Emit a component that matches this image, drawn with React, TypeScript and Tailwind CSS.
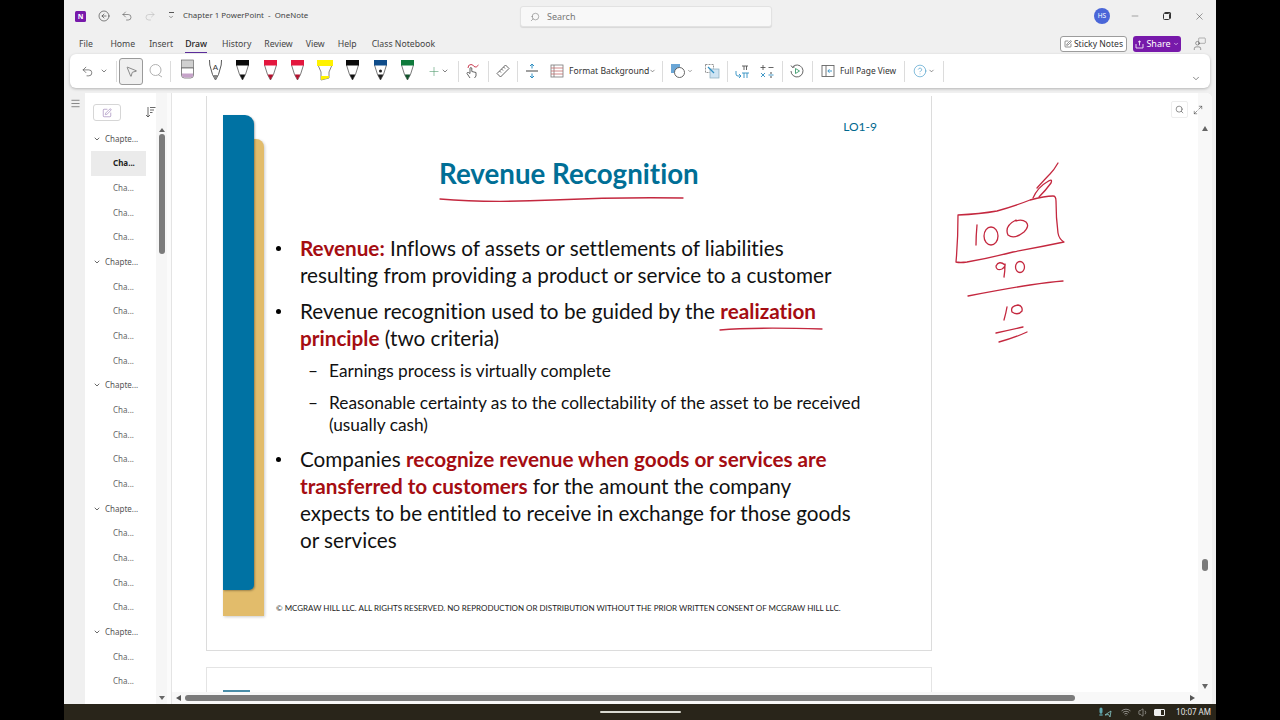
import React from "react";
import { ChevronDown, CircleArrowLeft, Undo2, Redo2, Minus, X, Search, Plus, Menu, Maximize2, SquarePen, CircleHelp, Wifi, Volume1, MessageSquare, User, MousePointer2 } from "lucide-react";

const ui = "font-['Noto_Sans','Open_Sans',sans-serif]";
const slide = "font-['Lato','Liberation_Sans',sans-serif] [font-variant-ligatures:none]";

function Pen({ color, tip = "#333", nib }: { color: string; tip?: string; nib?: boolean }) {
  return (
    <svg width="15" height="24" viewBox="0 0 15 24">
      <path d="M1.5 6 L4.5 15.5 L7.5 21 L10.5 15.5 L13.5 6" fill="#fff" stroke="#555" strokeWidth="0.8" />
      <path d="M4.7 15.5 L7.5 21 L10.3 15.5 Z" fill={tip} />
      <rect x="1" y="1" width="13" height="5.5" fill={color} />
      {nib && <circle cx="7.5" cy="12" r="1.5" fill="#222" />}
    </svg>
  );
}

function Divider({ cls }: { cls: string }) {
  return <div className={`w-px h-[21px] bg-[#dcdcdc] shrink-0 ${cls}`} />;
}

function Box({ cls, children }: { cls: string; children?: React.ReactNode }) {
  return <div className={`flex items-center justify-center shrink-0 ${cls}`}>{children}</div>;
}

function Ribbon() {
  return (
    <div className={`mx-[6px] h-[34px] bg-white rounded-[6px] shadow-[0_1px_3px_rgba(0,0,0,0.25)] flex items-center pl-[9px] relative ${ui}`}>
      <Box cls="w-[17px]"><Undo2 size={13} strokeWidth={1.2} color="#444" /></Box>
      <Box cls="w-[16px]"><ChevronDown size={8} strokeWidth={2} color="#444" /></Box>
      <Divider cls="ml-[4px]" />
      <Box cls="ml-[2px] w-[24px] h-[27px] bg-[#f0f0f0] border border-[#9a9a9a] rounded-[3px]"><MousePointer2 size={13} strokeWidth={1.1} color="#444" /></Box>
      <Box cls="ml-px w-[24px]">
        <svg width="16" height="16" viewBox="0 0 16 16" fill="none" stroke="#a8a8a8" strokeWidth="0.9"><circle cx="7.5" cy="7" r="5.5" /><path d="M10 11.5 L14 14" /></svg>
      </Box>
      <Divider cls="ml-[2px]" />
      <Box cls="ml-[3px] w-[27.5px]">
        <svg width="15" height="24" viewBox="0 0 15 24">
          <rect x="1.5" y="1" width="12" height="8" fill="#d0d0d0" stroke="#555" strokeWidth="0.6" />
          <path d="M1.5 9 H13.5 V16 Q13.5 19 10.5 19 H4.5 Q1.5 19 1.5 16 Z" fill="#fff" stroke="#555" strokeWidth="0.7" />
          <path d="M2 14.5 H13 V16 Q13 18.5 10.5 18.5 H4.5 Q2 18.5 2 16 Z" fill="#c6a3c9" />
        </svg>
      </Box>
      <Box cls="w-[27.5px]">
        <svg width="15" height="24" viewBox="0 0 15 24" fill="none">
          <path d="M1.5 1 L1.8 6 L4.5 15.5 L7.5 21 L10.5 15.5 L13.2 6 L13.5 1" fill="#fff" stroke="#444" strokeWidth="0.9" />
          <path d="M5 16 L7.5 21 L10 16 Z" fill="#888" />
          <text x="7.5" y="11" textAnchor="middle" fontSize="8" fill="#333" fontFamily="Liberation Sans">A</text>
        </svg>
      </Box>
      <Box cls="w-[27.5px]"><Pen color="#0a0a0a" tip="#111" /></Box>
      <Box cls="w-[27.5px]"><Pen color="#e3173e" tip="#b3122f" /></Box>
      <Box cls="w-[27.5px]"><Pen color="#e3173e" tip="#b3122f" /></Box>
      <Box cls="w-[27.5px]">
        <svg width="18" height="24" viewBox="0 0 18 24">
          <path d="M2 6 L5 13 V21 L13 19 V13 L16 6" fill="#fff" stroke="#666" strokeWidth="0.8" />
          <path d="M5 17 H13 V19 L5 21 Z" fill="#fff200" />
          <rect x="1" y="1" width="16" height="6" fill="#fff200" />
        </svg>
      </Box>
      <Box cls="w-[27.5px]"><Pen color="#0a0a0a" tip="#111" /></Box>
      <Box cls="w-[27.5px]"><Pen color="#0f4c8a" tip="#222" nib /></Box>
      <Box cls="w-[27.5px]"><Pen color="#0f7a3c" tip="#14532d" /></Box>
      <Box cls="ml-[5px] w-[14px]"><Plus size={15} strokeWidth={1} color="#4d9a6a" /></Box>
      <Box cls="w-[8px]"><ChevronDown size={8} strokeWidth={2} color="#444" /></Box>
      <Divider cls="ml-[9px]" />
      <Box cls="ml-[6px] w-[16px]">
        <svg width="15" height="16" viewBox="0 0 15 16" fill="none" stroke="#555" strokeWidth="0.9"><path d="M5 15 L2 10.5 Q2 9 3.5 9.5 L5 10.5 V5 Q5.8 4 6.8 5 V8.5 L11 9.5 V13 L9.5 15" /><path d="M3 5 Q3 1.5 6 1.5 Q8 1.5 9 3.5 Q11 5.5 13.5 2" stroke="#c4283f" /></svg>
      </Box>
      <Divider cls="ml-[7px]" />
      <Box cls="ml-[6px] w-[16px]">
        <svg width="14" height="14" viewBox="0 0 14 14" fill="none" stroke="#555" strokeWidth="0.9"><path d="M1 9.5 L9.5 1 L13 4.5 L4.5 13 Z" /><path d="M3.5 7 l1.5 1.5 M5.5 5 l1.5 1.5 M7.5 3 l1.5 1.5" /></svg>
      </Box>
      <Divider cls="ml-[6px]" />
      <Box cls="ml-[6px] w-[16px]">
        <svg width="14" height="16" viewBox="0 0 14 16" fill="none" stroke="#2f8fc2" strokeWidth="1"><path d="M7 1 V5.5 M5 3 L7 1 L9 3 M7 15 V10.5 M5 13 L7 15 L9 13" /><path d="M1 8 H13" stroke="#777" strokeWidth="1.4" /></svg>
      </Box>
      <Box cls="ml-[4.5px] w-[25px]">
        <svg width="14" height="14" viewBox="0 0 14 14" fill="none" stroke="#777" strokeWidth="0.8"><rect x="1" y="1" width="12" height="12" /><path d="M4 1 V13" /><path d="M1 4 H13 M1 7 H13 M1 10 H13" stroke="#c46a6a" /></svg>
      </Box>
      <span className="text-[8.6px] text-[#333] whitespace-nowrap w-[80px]">Format Background</span>
      <Box cls="w-[7px]"><ChevronDown size={8} strokeWidth={2} color="#444" /></Box>
      <Divider cls="ml-[6px]" />
      <Box cls="ml-[6.5px] w-[17px]">
        <svg width="16" height="16" viewBox="0 0 16 16" fill="none"><rect x="1" y="1" width="9" height="9" fill="#6aa6d6" /><circle cx="9.5" cy="9.5" r="5" fill="#fff" stroke="#555" strokeWidth="0.9" /></svg>
      </Box>
      <Box cls="w-[6px]"><ChevronDown size={8} strokeWidth={2} color="#444" /></Box>
      <Box cls="ml-[9.5px] w-[20px]">
        <svg width="16" height="16" viewBox="0 0 16 16" fill="none"><rect x="1.5" y="1.5" width="8" height="8" stroke="#777" strokeWidth="0.8" strokeDasharray="2 1" /><rect x="6" y="6" width="9" height="9" fill="#cfe4f3" stroke="#8ab" strokeWidth="0.7" /><path d="M4 4 L10 10" stroke="#2f8fc2" strokeWidth="1.2" /></svg>
      </Box>
      <Divider cls="ml-[5px]" />
      <Box cls="ml-[6px] w-[16px]">
        <svg width="15" height="16" viewBox="0 0 15 16" fill="none" stroke="#2f8fc2" strokeWidth="0.9"><path d="M1 8 V11 Q1 13 3 13 H6 M4 11 L6 13 L4 15" /><path d="M7 3 H13 M9 3 V7 M11.5 3 V7" stroke="#555" /><path d="M7 10 H14 M9 10 V15 M12 10 V15" /></svg>
      </Box>
      <Box cls="ml-[9px] w-[16px]">
        <svg width="14" height="14" viewBox="0 0 14 14" fill="none" stroke="#555" strokeWidth="0.9"><path d="M3 1 V6 M0.5 3.5 H5.5 M8.5 3.5 H13.5" /><path d="M1 9 L5 13 M5 9 L1 13" stroke="#2f8fc2" /><path d="M8.5 11 H13.5" stroke="#2f8fc2" /><circle cx="11" cy="9" r="0.5" /><circle cx="11" cy="13" r="0.5" /></svg>
      </Box>
      <Divider cls="ml-[7px]" />
      <Box cls="ml-[6px] w-[16px]">
        <svg width="14" height="14" viewBox="0 0 14 14" fill="none" stroke="#555" strokeWidth="0.9"><path d="M2.5 3 A6 6 0 1 1 1 7" /><path d="M1 1.5 L2.5 3.5 L4.8 2.8" /><path d="M5.5 4.5 L9.5 7 L5.5 9.5 Z" stroke="#3a9a6a" /></svg>
      </Box>
      <Divider cls="ml-[7px]" />
      <Box cls="ml-[7px] w-[16px]">
        <svg width="14" height="14" viewBox="0 0 14 14" fill="none" stroke="#666" strokeWidth="0.9"><rect x="1" y="1.5" width="12" height="11" /><path d="M5 1.5 V12.5" /><path d="M11 7 H7 M8.5 5.2 L6.8 7 L8.5 8.8" stroke="#2f8fc2" /></svg>
      </Box>
      <span className="ml-[4px] text-[8.4px] text-[#333] whitespace-nowrap w-[57px]">Full Page View</span>
      <Divider cls="ml-[7px]" />
      <Box cls="ml-[7px] w-[16px]"><CircleHelp size={14} strokeWidth={1} color="#2f8fc2" /></Box>
      <Box cls="w-[7px]"><ChevronDown size={8} strokeWidth={2} color="#444" /></Box>
      <Divider cls="ml-[8px]" />
      <Box cls="ml-auto mr-[9px] mt-[14px] w-[10px]"><ChevronDown size={11} strokeWidth={1.4} color="#333" /></Box>
    </div>
  );
}

const tabs: [string, string][] = [
  ["File", "ml-[15px]"],
  ["Home", "ml-[17.5px]"],
  ["Insert", "ml-[14px]"],
  ["Draw", "ml-[12px]"],
  ["History", "ml-[15px]"],
  ["Review", "ml-[13px]"],
  ["View", "ml-[13px]"],
  ["Help", "ml-[13px]"],
  ["Class Notebook", "ml-[15px]"],
];

function Sidebar() {
  const rows: { t: string; section?: boolean; active?: boolean }[] = [];
  for (let s = 0; s < 5; s++) {
    rows.push({ t: "Chapte...", section: true });
    for (let i = 0; i < 4; i++) rows.push({ t: "Cha...", active: s === 0 && i === 0 });
  }
  return (
    <div className={`w-[87px] shrink-0 bg-white flex ${ui}`}>
      <div className="w-[71px] shrink-0 overflow-hidden">
        <div className="h-[33.5px] pt-[11px] flex items-start">
          <div className="ml-[8px] w-[28px] h-[17px] border border-[#d6d6d6] rounded-[3px] flex items-center justify-center">
            <SquarePen size={10} strokeWidth={1.2} color="#7d5a9e" />
          </div>
          <svg className="ml-[24px] mt-[2px]" width="11" height="12" viewBox="0 0 11 12" fill="none" stroke="#444" strokeWidth="0.8"><path d="M3 1 V11 M1 9 L3 11 L5 9 M5 1.5 H10.5 M5 4 H9 M5 6.5 H7.5" /></svg>
        </div>
        {rows.slice(0, 23).map((r, i) => (
          <div key={i} className={`h-[24.67px] flex items-center whitespace-nowrap text-[8px] ${r.active ? "ml-[6px] w-[55px] bg-[#ebebeb] font-bold text-[#222] pl-[22px]" : r.section ? "pl-[8px] text-[#555]" : "pl-[28px] text-[#666]"}`}>
            {r.section && <ChevronDown size={8} strokeWidth={2.2} color="#333" className="mr-[4px]" />}
            {r.t}
          </div>
        ))}
      </div>
      <div className="w-[11px] shrink-0 bg-[#f6f6f6] flex flex-col items-center pt-[35px] pb-[4px]">
        <div className="w-0 h-0 border-l-[3px] border-r-[3px] border-b-[4px] border-l-transparent border-r-transparent border-b-[#666]" />
        <div className="mt-[2px] w-[6px] h-[120px] bg-[#7b7b7b] rounded-[3px]" />
        <div className="mt-auto w-0 h-0 border-l-[3px] border-r-[3px] border-t-[4px] border-l-transparent border-r-transparent border-t-[#666]" />
      </div>
      <div className="flex-1 bg-[#fbfbfb] border-r border-[#e4e4e4]" />
    </div>
  );
}

function Bullet({ children }: { children: React.ReactNode }) {
  return (
    <div className="flex text-[20.7px] leading-[27px] text-[#111]">
      <div className="w-[25px] shrink-0 flex items-center h-[27px] pl-[1px]"><div className="w-[5px] h-[5px] rounded-full bg-black" /></div>
      <div className="w-[560px]">{children}</div>
    </div>
  );
}

function Sub({ children, cls }: { children: React.ReactNode; cls: string }) {
  return (
    <div className={`flex text-[17.3px] leading-[22px] text-[#111] ${cls}`}>
      <div className="ml-[33px] w-[21px] shrink-0">–</div>
      <div className="w-[545px]">{children}</div>
    </div>
  );
}

const R = ({ children }: { children: React.ReactNode }) => <span className="font-bold text-[#a50d12]">{children}</span>;

function Slide() {
  return (
    <div className={`ml-[34px] w-[726px] h-[555px] border-x border-b border-[#dcdcdc] flex pl-[16px] pt-[19px] ${slide}`}>
      <div className="w-[41px] h-[501px] shrink-0 relative">
        <div className="absolute left-0 right-0 top-[24px] bottom-0 bg-[#e2bc6b] rounded-tr-[8px] shadow-[1px_1px_3px_rgba(0,0,0,0.2)]" />
        <div className="absolute left-0 top-0 w-[31px] h-[475px] bg-[#0072a3] rounded-tr-[9px] rounded-br-[5px] shadow-[1px_1px_2px_rgba(0,0,0,0.3)]" />
      </div>
      <div className="ml-[11px] flex-1">
        <div className="h-[24px] flex items-center justify-end pr-[54px] text-[12px] text-[#00688f]">LO1-9</div>
        <div className="mt-[17px] pl-[164px] text-[27.7px] leading-[36px] font-bold text-[#006f96] whitespace-nowrap">Revenue Recognition</div>
        <div className="mt-[42.5px]">
          <Bullet><R>Revenue:</R> Inflows of assets or settlements of liabilities resulting from providing a product or service to a customer</Bullet>
        </div>
        <div className="mt-[9px]">
          <Bullet>Revenue recognition used to be guided by the <R>realization principle</R> (two criteria)</Bullet>
        </div>
        <Sub cls="mt-[8.5px]">Earnings process is virtually complete</Sub>
        <Sub cls="mt-[9.5px]">Reasonable certainty as to the collectability of the asset to be received (usually cash)</Sub>
        <div className="mt-[10px]">
          <Bullet>Companies <R>recognize revenue when goods or services are transferred to customers</R> for the amount the company expects to be entitled to receive in exchange for those goods or services</Bullet>
        </div>
        <div className="mt-[47px] ml-px text-[7.97px] leading-[14px] text-[#222] whitespace-nowrap">© MCGRAW HILL LLC. ALL RIGHTS RESERVED. NO REPRODUCTION OR DISTRIBUTION WITHOUT THE PRIOR WRITTEN CONSENT OF MCGRAW HILL LLC.</div>
      </div>
    </div>
  );
}

function Canvas() {
  return (
    <div className="flex-1 flex flex-col min-w-0 relative">
      <div className="flex-1 flex min-h-0">
        <div className="flex-1 pt-[3px] overflow-hidden bg-white">
          <Slide />
          <div className="mt-[16px] ml-[34px] w-[726px] h-[40px] border-x border-t border-[#e4e4e4] pl-[16px] pt-[22px]">
            <div className="w-[27px] h-[1.5px] bg-[#4a8da8]" />
          </div>
        </div>
        <div className="w-[14px] shrink-0 bg-[#f8f8f8] flex flex-col items-center pt-[33px] pb-[3px]">
          <div className="w-0 h-0 border-l-[3.5px] border-r-[3.5px] border-b-[5px] border-l-transparent border-r-transparent border-b-[#666]" />
          <div className="mt-[428px] w-[6px] h-[12px] bg-[#7b7b7b] rounded-[3px]" />
          <div className="mt-auto w-0 h-0 border-l-[3.5px] border-r-[3.5px] border-t-[5px] border-l-transparent border-r-transparent border-t-[#666]" />
        </div>
      </div>
      <div className="h-[12px] shrink-0 bg-[#f8f8f8] flex items-center pl-[4px] pr-[14px]">
        <div className="w-0 h-0 border-t-[3.5px] border-b-[3.5px] border-r-[5px] border-t-transparent border-b-transparent border-r-[#555]" />
        <div className="ml-[4px] w-[890px] h-[6px] bg-[#7b7b7b] rounded-[3px]" />
        <div className="ml-auto mr-[3px] w-0 h-0 border-t-[3.5px] border-b-[3.5px] border-l-[5px] border-t-transparent border-b-transparent border-l-[#555]" />
      </div>
      <div className="absolute top-[8px] right-[9px] flex items-center gap-[4px]">
        <div className="w-[17px] h-[17px] bg-white border border-[#eeeeee] rounded-[2px] flex items-center justify-center"><Search size={9} strokeWidth={1.5} color="#444" /></div>
        <Maximize2 size={10} strokeWidth={1.2} color="#333" className="ml-[1px]" />
      </div>
    </div>
  );
}

function Ink() {
  return (
    <svg className="absolute inset-0 pointer-events-none" width="1280" height="720" viewBox="0 0 1280 720" fill="none" stroke="#c4283f" strokeWidth="1.3" strokeLinecap="round" strokeLinejoin="round">
      <path d="M440 199 Q487 203 553 200 T683 198" />
      <path d="M720 330 Q753 327 822 329" />
      <path d="M958 215 Q980 214 997 211 Q1015 206 1030 200 Q1045 196 1053 196 Q1056 196 1056 201 Q1056 218 1058 233 Q1059 239 1064 242 Q1040 247 1013 252 Q990 258 967 262 Q960 263 956 262 Q958 240 958 215" />
      <path d="M1033 198 Q1038 187 1047 182 Q1053 178 1051 183 Q1046 190 1039 197 M1037 188 Q1046 178 1050 174 Q1054 170 1058 163" />
      <path d="M977 225 Q976 236 976 245" />
      <ellipse cx="991" cy="236" rx="7" ry="9" />
      <path d="M1016 220 Q1004 226 1008 235 Q1014 240 1024 232 Q1030 226 1026 222 Q1022 219 1016 221" />
      <path d="M1005 265 Q999 260 996 266 Q996 271 1002 269 Q1006 266 1005 264 Q1005 272 1004 277" />
      <ellipse cx="1020" cy="267" rx="4.5" ry="5.5" />
      <path d="M968 296 Q1010 288 1030 285 Q1050 282 1063 281" />
      <path d="M1004 320 Q1006 313 1007 307" />
      <path d="M1018 305 Q1010 306 1012 312 Q1018 316 1022 311 Q1023 306 1018 305" />
      <path d="M996 333 Q1010 330 1023 327" />
      <path d="M999 342 Q1014 338 1027 332" />
    </svg>
  );
}

export default function App() {
  return (
    <div className="w-[1280px] h-[720px] bg-black overflow-hidden relative">
      <div className="ml-[64px] w-[1152px] h-[704px] bg-[#f0f0f0] flex flex-col">
        <div className={`h-[32px] flex items-center shrink-0 text-[#444] ${ui}`}>
          <div className="ml-[11px] w-[11px] h-[11px] bg-[#7719aa] rounded-[1.5px] flex items-center justify-center text-[7px] font-bold text-white leading-none">N</div>
          <CircleArrowLeft className="ml-[12px]" size={12} strokeWidth={1.2} color="#333" />
          <Undo2 className="ml-[11px]" size={12} strokeWidth={1.1} color="#444" />
          <Redo2 className="ml-[11px]" size={12} strokeWidth={1.1} color="#b5b5b5" />
          <div className="ml-[11px] w-[8px] flex flex-col items-center gap-[1px]"><div className="w-[5px] h-px bg-[#555]" /><ChevronDown size={6} strokeWidth={2.4} color="#555" /></div>
          <span className="ml-[8px] text-[7.9px] whitespace-nowrap">Chapter 1 PowerPoint&nbsp; -&nbsp; OneNote</span>
          <div className="absolute left-[520px] top-[6px] w-[252px] h-[21px] bg-[#f8f8f8] border border-[#e2e2e2] rounded-[3px] shadow-[0_1px_1px_rgba(0,0,0,0.1)] flex items-center pl-[9px]">
            <Search size={10} strokeWidth={1.2} color="#666" className="-scale-x-100" />
            <span className="ml-[7px] text-[9px] text-[#777]">Search</span>
          </div>
          <div className="ml-auto w-[16px] h-[16px] rounded-full bg-[#4a66d8] text-white text-[6.5px] flex items-center justify-center">HS</div>
          <Minus className="ml-[20px]" size={10} strokeWidth={1} color="#333" />
          <div className="ml-[23px] w-[7px] h-[7px] border border-[#333] rounded-[1.5px] shadow-[1px_-1px_0_0_#333]" />
          <X className="ml-[24px] mr-[11px]" size={11} strokeWidth={1} color="#333" />
        </div>
        <div className={`h-[22px] flex items-start shrink-0 relative text-[8.7px] text-[#444] ${ui}`}>
          <div className="flex pt-[6px]">
            {tabs.map(([t, m]) => (
              <div key={t} className={`${m} whitespace-nowrap ${t === "Draw" ? "font-medium text-[#222] border-b-[1.5px] border-[#5b2d9c] h-[14.5px] leading-[13px]" : "leading-[13px]"}`}>{t}</div>
            ))}
          </div>
          <div className="ml-auto flex items-center pt-[4px] pr-[10px]">
            <div className="w-[67px] h-[16px] bg-white border border-[#9c9c9c] rounded-[3px] flex items-center justify-center text-[#333] gap-[2px]">
              <SquarePen size={8} strokeWidth={1.6} color="#333" />
              <span className="whitespace-nowrap text-[8.6px]">Sticky Notes</span>
            </div>
            <div className="ml-[6px] w-[48px] h-[16px] bg-[#7719aa] rounded-[3px] flex items-center justify-center text-white gap-[2px]">
              <svg width="9" height="9" viewBox="0 0 9 9" fill="none" stroke="#fff" strokeWidth="0.8"><path d="M1 4 V8 H8 V4 M4.5 5.5 V1 M3 2.2 L4.5 1 L6 2.2" /></svg>
              <span className="text-[9px]">Share</span>
              <ChevronDown size={6} strokeWidth={2.4} color="#fff" />
            </div>
            <div className="ml-[11px] relative w-[14px] h-[14px]">
              <User size={11} strokeWidth={1} color="#333" className="absolute left-0 bottom-0" />
              <MessageSquare size={8} strokeWidth={1} color="#333" className="absolute right-0 top-0" />
            </div>
          </div>
        </div>
        <Ribbon />
        <div className="mt-[5px] h-[611px] flex shrink-0">
          <div className="w-[21px] shrink-0 pt-[5px] flex justify-center pl-[1px]"><Menu size={11} strokeWidth={1.2} color="#333" /></div>
          <div className="flex-1 flex mr-[4px] bg-white rounded-tr-[6px] overflow-hidden">
            <Sidebar />
            <Canvas />
          </div>
        </div>
      </div>
      <div className={`h-[16px] bg-[#29251a] flex items-center relative ml-[64px] w-[1152px] ${ui}`}>
        <div className="absolute left-[536px] top-[7px] w-[81px] h-[2px] bg-[#d8d8d0] rounded-full" />
        <div className="ml-auto flex items-center pr-[5px] text-[#e6e6e6]">
          <svg width="14" height="11" viewBox="0 0 14 11" fill="none"><rect x="1.5" y="0.5" width="3" height="6" rx="1.5" fill="#5fa8b0" /><path d="M1 8 H5 M3 6 V9" stroke="#5fa8b0" strokeWidth="0.8" /><path d="M7 8 L13 4 L12 10 L10.5 7.5 Z" stroke="#8cc" strokeWidth="0.8" /></svg>
          <Wifi className="ml-[9px]" size={10} strokeWidth={1.2} color="#eee" />
          <Volume1 className="ml-[7px]" size={11} strokeWidth={1.1} color="#ddd" />
          <div className="ml-[5px] w-[11px] h-[7px] border border-[#eee] rounded-[1px] flex"><div className="w-[6px] bg-[#eee]" /></div>
          <span className="ml-[11px] text-[8px] whitespace-nowrap">10:07 AM</span>
        </div>
      </div>
      <Ink />
    </div>
  );
}
